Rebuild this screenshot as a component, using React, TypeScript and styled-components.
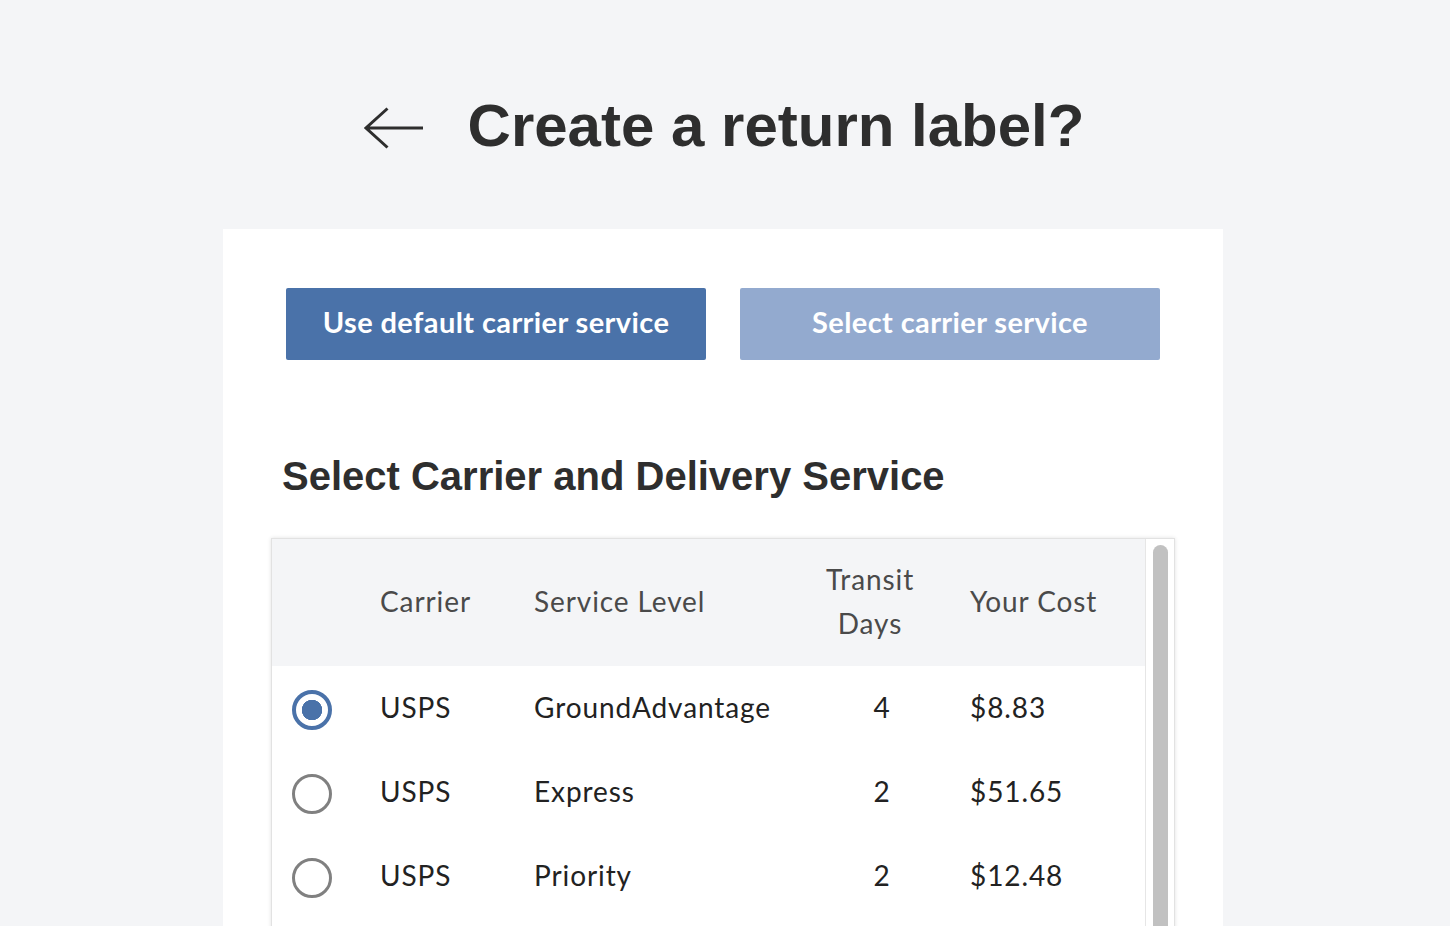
import React, { useState } from "react";
import styled, { createGlobalStyle } from "styled-components";

const GlobalStyle = createGlobalStyle`
  html, body {
    margin: 0;
    padding: 0;
    background: #f4f5f7;
    overflow: hidden;
  }
  * { box-sizing: border-box; }
`;

const Page = styled.main`
  min-height: 100vh;
  background: #f4f5f7;
  padding: 91px 4px 0 0;
  display: flex;
  flex-direction: column;
  align-items: center;
`;

const TitleRow = styled.div`
  display: flex;
  align-items: center;
  gap: 44px;
  margin-left: 2px;
`;

const BackButton = styled.button`
  border: none;
  background: transparent;
  padding: 0;
  width: 60px;
  height: 42px;
  display: flex;
  cursor: pointer;
  margin-top: 5px;
`;

const Title = styled.h1`
  margin: 0;
  font-family: "Liberation Sans", Arial, sans-serif;
  font-weight: 700;
  font-size: 60px;
  line-height: 69px;
  color: #2e2e2e;
`;

const Card = styled.section`
  width: 1000px;
  margin-top: 69px;
  background: #ffffff;
  padding: 59px 48px 80px;
`;

const ButtonRow = styled.div`
  display: flex;
  gap: 34px;
  padding: 0 15px;
`;

const ModeButton = styled.button<{ $active?: boolean }>`
  width: 420px;
  height: 72px;
  border: none;
  border-radius: 2px;
  background: ${(p) => (p.$active ? "#4a72a9" : "#93aacf")};
  color: #ffffff;
  font-family: Lato, "Open Sans", sans-serif;
  font-weight: 700;
  font-size: 29px;
  letter-spacing: 0.4px;
  padding: 0 0 5px;
  cursor: pointer;
`;

const SectionHeading = styled.h2`
  margin: 93px 0 39px 11px;
  font-family: "Liberation Sans", Arial, sans-serif;
  font-weight: 700;
  font-size: 40px;
  line-height: 46px;
  color: #2e2e2e;
`;

const TableBox = styled.div`
  height: 500px;
  display: flex;
  border: 1px solid #e2e2e2;
  box-shadow: 0 0 4px rgba(0, 0, 0, 0.12);
  background: #ffffff;
`;

const TableViewport = styled.div`
  flex: 1;
  overflow: hidden;
`;

const ScrollTrack = styled.div`
  width: 29px;
  flex-shrink: 0;
  border-left: 1px solid #e6e6e6;
  padding: 6px 6px 0 7px;
  background: #ffffff;
`;

const ScrollThumb = styled.div`
  height: 440px;
  border-radius: 8px;
  background: #c1c1c1;
`;

const Table = styled.table`
  width: 100%;
  table-layout: fixed;
  border-collapse: collapse;
  font-family: Lato, "Open Sans", sans-serif;
  font-size: 28px;
  letter-spacing: 0.9px;
`;

const HeadRow = styled.tr`
  height: 127px;
  background: #f4f5f7;
`;

const Th = styled.th<{ $center?: boolean; $pr?: number }>`
  font-weight: 400;
  color: #4a4a4a;
  line-height: 44px;
  text-align: ${(p) => (p.$center ? "center" : "left")};
  padding: 0 ${(p) => p.$pr ?? 0}px 3px 20px;
`;

const Row = styled.tr`
  height: 84px;
`;

const Td = styled.td<{ $center?: boolean }>`
  color: #222222;
  padding: 0 0 2px ${(p) => (p.$center ? 14 : 20)}px;
  text-align: ${(p) => (p.$center ? "center" : "left")};
  white-space: nowrap;
`;

const RadioCell = styled.td`
  padding: 4px 0 0 20px;
  vertical-align: middle;
`;

const Radio = styled.input.attrs({ type: "radio" })`
  appearance: none;
  -webkit-appearance: none;
  margin: 0;
  display: block;
  width: 40px;
  height: 40px;
  border-radius: 50%;
  border: 3.5px solid #808080;
  background: #ffffff;
  cursor: pointer;

  &:checked {
    border: 4px solid #4a72a9;
    background: radial-gradient(circle, #4a72a9 0 10px, #ffffff 10.5px);
  }
`;

type Rate = { carrier: string; service: string; days: number; cost: string };

const rates: Rate[] = [
  { carrier: "USPS", service: "GroundAdvantage", days: 4, cost: "$8.83" },
  { carrier: "USPS", service: "Express", days: 2, cost: "$51.65" },
  { carrier: "USPS", service: "Priority", days: 2, cost: "$12.48" },
];

export default function App() {
  const [selected, setSelected] = useState(0);
  return (
    <>
      <GlobalStyle />
      <Page>
        <TitleRow>
          <BackButton aria-label="Back">
            <svg width="60" height="42" viewBox="0 0 60 42" fill="none">
              <path
                d="M59 21H2M23.5 1.5L2 21l21.5 19.5"
                stroke="#2e2e2e"
                strokeWidth="3"
              />
            </svg>
          </BackButton>
          <Title>Create a return label?</Title>
        </TitleRow>
        <Card>
          <ButtonRow>
            <ModeButton $active>Use default carrier service</ModeButton>
            <ModeButton>Select carrier service</ModeButton>
          </ButtonRow>
          <SectionHeading>Select Carrier and Delivery Service</SectionHeading>
          <TableBox>
            <TableViewport>
              <Table>
                <colgroup>
                  <col style={{ width: 88 }} />
                  <col style={{ width: 154 }} />
                  <col style={{ width: 286 }} />
                  <col style={{ width: 150 }} />
                  <col />
                </colgroup>
                <thead>
                  <HeadRow>
                    <Th />
                    <Th>Carrier</Th>
                    <Th>Service Level</Th>
                    <Th $center $pr={30}>
                      Transit
                      <br />
                      Days
                    </Th>
                    <Th>Your Cost</Th>
                  </HeadRow>
                </thead>
                <tbody>
                  {rates.map((r, i) => (
                    <Row key={r.service}>
                      <RadioCell>
                        <Radio
                          name="rate"
                          checked={selected === i}
                          onChange={() => setSelected(i)}
                        />
                      </RadioCell>
                      <Td>{r.carrier}</Td>
                      <Td>{r.service}</Td>
                      <Td $center>{r.days}</Td>
                      <Td>{r.cost}</Td>
                    </Row>
                  ))}
                </tbody>
              </Table>
            </TableViewport>
            <ScrollTrack>
              <ScrollThumb />
            </ScrollTrack>
          </TableBox>
        </Card>
      </Page>
    </>
  );
}
